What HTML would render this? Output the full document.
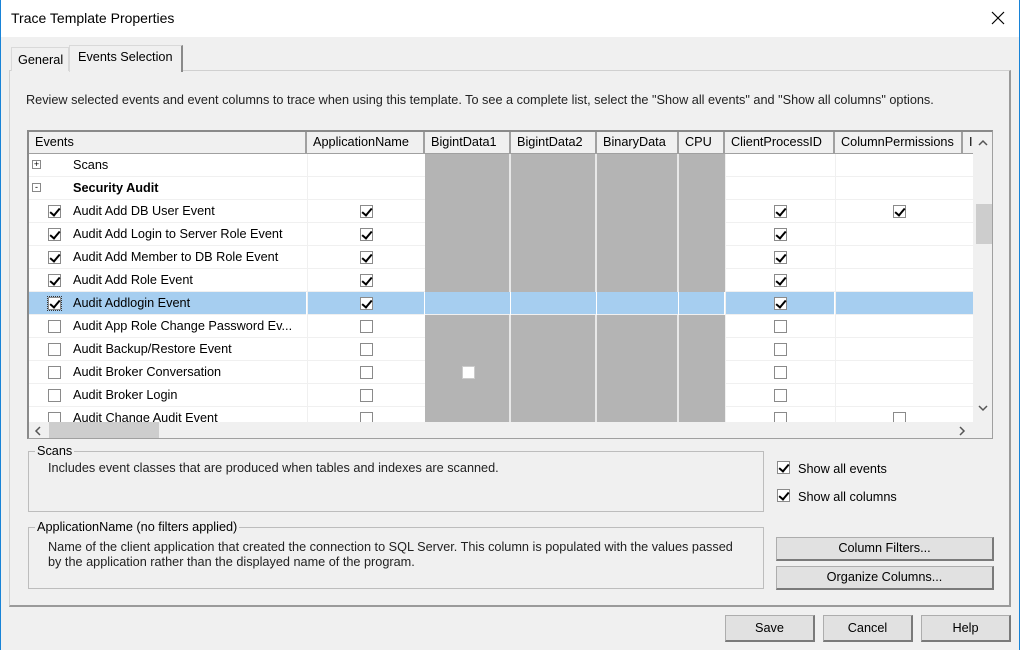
<!DOCTYPE html>
<html><head><style>
*{box-sizing:border-box;margin:0;padding:0}
body{width:1024px;height:650px;background:#fff;font-family:"Liberation Sans",sans-serif;font-size:12.7px;color:#000;position:relative;overflow:hidden}
.a{position:absolute}
.win{left:0;top:0;width:1020px;height:650px;background:#f0f0f0;border-left:1px solid #1883d7;border-right:1px solid #1883d7}
.title{left:1px;top:0;width:1018px;height:37px;background:#fff}
.cb{position:absolute;width:13px;height:13px;border:1px solid #8a8a8a;background:#fff}
.cb.c::after{content:"";position:absolute;left:3px;top:0px;width:4px;height:8px;border:solid #000;border-width:0 2px 2px 0;transform:rotate(40deg)}
.hd{position:absolute;top:0;height:22px;border-right:2px solid #a0a0a0;border-bottom:1px solid #a0a0a0;background:#f0f0f0;padding:3px 0 0 6px;white-space:nowrap;overflow:hidden}
.row{position:absolute;left:0;width:944px;height:23px;border-bottom:1px solid #f0f0f0}
.gr{position:absolute;top:0;height:23px;background:#b4b4b4;border-right:2px solid #e8e8e8}
.txt{position:absolute;left:44px;top:4px;white-space:nowrap}
.btn{position:absolute;background:#e1e1e1;border:1px solid #adadad;border-right:2px solid #7a7a7a;border-bottom:2px solid #7a7a7a;text-align:center;line-height:21px}
.gb{position:absolute;border:1px solid #bdbdbd}
.gl{position:absolute;top:-8px;left:6px;background:#f0f0f0;padding:0 2px}
</style></head><body>
<div class="a win"></div>
<div class="a title"></div>
<div class="a" style="left:11px;top:10px;font-size:14px">Trace Template Properties</div>
<svg class="a" style="left:991px;top:11px" width="14" height="14"><path d="M1 1L13 13M13 1L1 13" stroke="#000" stroke-width="1.2"/></svg>
<div class="a" style="left:9px;top:70px;width:1002px;height:537px;border:1px solid #d0d0d0;border-right:2px solid #9a9a9a;border-bottom:2px solid #9a9a9a;background:#f0f0f0"></div>
<div class="a" style="left:11px;top:47px;width:58px;height:24px;border:1px solid #d9d9d9;border-bottom:none;padding:5px 0 0 6px;background:#f0f0f0">General</div>
<div class="a" style="left:69px;top:45px;width:114px;height:27px;border:1px solid #d9d9d9;border-right:2px solid #8a8a8a;border-bottom:none;padding:4px 0 0 8px;background:#f0f0f0">Events Selection</div>
<div class="a" style="left:26px;top:93px;color:#222;white-space:nowrap">Review selected events and event columns to trace when using this template. To see a complete list, select the "Show all events" and "Show all columns" options.</div>
<div class="a" style="left:27px;top:130px;width:966px;height:309px;border:1px solid #a0a0a0;border-top:2px solid #8a8a8a;border-left:2px solid #8a8a8a;background:#fff;overflow:hidden">
 <div class="a" style="left:0;top:0;width:944px;height:290px;overflow:hidden">
  <div class="hd" style="left:0;width:278px">Events</div>
  <div class="hd" style="left:278px;width:118px">ApplicationName</div>
  <div class="hd" style="left:396px;width:86px">BigintData1</div>
  <div class="hd" style="left:482px;width:86px">BigintData2</div>
  <div class="hd" style="left:568px;width:82px">BinaryData</div>
  <div class="hd" style="left:650px;width:46px">CPU</div>
  <div class="hd" style="left:696px;width:110px">ClientProcessID</div>
  <div class="hd" style="left:806px;width:128px">ColumnPermissions</div>
  <div class="hd" style="left:934px;width:30px">I</div>
  <div class="a" style="left:0;top:22px;width:944px;height:270px">
   <div class="row" style="top:0"><div class="gr" style="left:396px;width:86px"></div><div class="gr" style="left:482px;width:86px"></div><div class="gr" style="left:568px;width:82px"></div><div class="gr" style="left:650px;width:46px;border:none"></div><div class="a" style="left:3px;top:6px;width:9px;height:9px;border:1px solid #888;font-size:9px;line-height:7px;text-align:center">+</div><div class="txt">Scans</div></div>
   <div class="row" style="top:23px"><div class="gr" style="left:396px;width:86px"></div><div class="gr" style="left:482px;width:86px"></div><div class="gr" style="left:568px;width:82px"></div><div class="gr" style="left:650px;width:46px;border:none"></div><div class="a" style="left:3px;top:6px;width:9px;height:9px;border:1px solid #888;font-size:9px;line-height:6px;text-align:center">-</div><div class="txt" style="font-weight:bold">Security Audit</div></div>
   <div class="row" style="top:46px"><div class="gr" style="left:396px;width:86px"></div><div class="gr" style="left:482px;width:86px"></div><div class="gr" style="left:568px;width:82px"></div><div class="gr" style="left:650px;width:46px;border:none"></div><div class="cb c" style="left:19px;top:5px"></div><div class="txt">Audit Add DB User Event</div><div class="cb c" style="left:331px;top:5px"></div><div class="cb c" style="left:745px;top:5px"></div><div class="cb c" style="left:864px;top:5px"></div></div>
   <div class="row" style="top:69px"><div class="gr" style="left:396px;width:86px"></div><div class="gr" style="left:482px;width:86px"></div><div class="gr" style="left:568px;width:82px"></div><div class="gr" style="left:650px;width:46px;border:none"></div><div class="cb c" style="left:19px;top:5px"></div><div class="txt">Audit Add Login to Server Role Event</div><div class="cb c" style="left:331px;top:5px"></div><div class="cb c" style="left:745px;top:5px"></div></div>
   <div class="row" style="top:92px"><div class="gr" style="left:396px;width:86px"></div><div class="gr" style="left:482px;width:86px"></div><div class="gr" style="left:568px;width:82px"></div><div class="gr" style="left:650px;width:46px;border:none"></div><div class="cb c" style="left:19px;top:5px"></div><div class="txt">Audit Add Member to DB Role Event</div><div class="cb c" style="left:331px;top:5px"></div><div class="cb c" style="left:745px;top:5px"></div></div>
   <div class="row" style="top:115px"><div class="gr" style="left:396px;width:86px"></div><div class="gr" style="left:482px;width:86px"></div><div class="gr" style="left:568px;width:82px"></div><div class="gr" style="left:650px;width:46px;border:none"></div><div class="cb c" style="left:19px;top:5px"></div><div class="txt">Audit Add Role Event</div><div class="cb c" style="left:331px;top:5px"></div><div class="cb c" style="left:745px;top:5px"></div></div>
   <div class="row" style="top:138px;background:#a6cef0"><div class="a" style="left:0;width:278px;height:23px;border-right:1px solid #fff"></div><div class="a" style="left:0;width:396px;height:23px;border-right:1px solid #fff"></div><div class="a" style="left:0;width:482px;height:23px;border-right:1px solid #fff"></div><div class="a" style="left:0;width:568px;height:23px;border-right:1px solid #fff"></div><div class="a" style="left:0;width:650px;height:23px;border-right:1px solid #fff"></div><div class="a" style="left:0;width:696px;height:23px;border-right:1px solid #fff"></div><div class="a" style="left:0;width:806px;height:23px;border-right:1px solid #fff"></div><div class="cb c" style="left:19px;top:5px;outline:1px dotted #333"></div><div class="txt">Audit Addlogin Event</div><div class="cb c" style="left:331px;top:5px"></div><div class="cb c" style="left:745px;top:5px"></div></div>
   <div class="row" style="top:161px"><div class="gr" style="left:396px;width:86px"></div><div class="gr" style="left:482px;width:86px"></div><div class="gr" style="left:568px;width:82px"></div><div class="gr" style="left:650px;width:46px;border:none"></div><div class="cb" style="left:19px;top:5px"></div><div class="txt">Audit App Role Change Password Ev...</div><div class="cb" style="left:331px;top:5px"></div><div class="cb" style="left:745px;top:5px"></div></div>
   <div class="row" style="top:184px"><div class="gr" style="left:396px;width:86px"></div><div class="gr" style="left:482px;width:86px"></div><div class="gr" style="left:568px;width:82px"></div><div class="gr" style="left:650px;width:46px;border:none"></div><div class="cb" style="left:19px;top:5px"></div><div class="txt">Audit Backup/Restore Event</div><div class="cb" style="left:331px;top:5px"></div><div class="cb" style="left:745px;top:5px"></div></div>
   <div class="row" style="top:207px"><div class="gr" style="left:396px;width:86px"></div><div class="gr" style="left:482px;width:86px"></div><div class="gr" style="left:568px;width:82px"></div><div class="gr" style="left:650px;width:46px;border:none"></div><div class="cb" style="left:19px;top:5px"></div><div class="txt">Audit Broker Conversation</div><div class="cb" style="left:331px;top:5px"></div><div class="cb" style="left:433px;top:5px;border-color:#ccc"></div><div class="cb" style="left:745px;top:5px"></div></div>
   <div class="row" style="top:230px"><div class="gr" style="left:396px;width:86px"></div><div class="gr" style="left:482px;width:86px"></div><div class="gr" style="left:568px;width:82px"></div><div class="gr" style="left:650px;width:46px;border:none"></div><div class="cb" style="left:19px;top:5px"></div><div class="txt">Audit Broker Login</div><div class="cb" style="left:331px;top:5px"></div><div class="cb" style="left:745px;top:5px"></div></div>
   <div class="row" style="top:253px"><div class="gr" style="left:396px;width:86px"></div><div class="gr" style="left:482px;width:86px"></div><div class="gr" style="left:568px;width:82px"></div><div class="gr" style="left:650px;width:46px;border:none"></div><div class="cb" style="left:19px;top:5px"></div><div class="txt">Audit Change Audit Event</div><div class="cb" style="left:331px;top:5px"></div><div class="cb" style="left:745px;top:5px"></div><div class="cb" style="left:864px;top:5px"></div></div>
  </div>
  <div class="a" style="left:278px;top:22px;width:1px;height:270px;background:#f0f0f0"></div>
  <div class="a" style="left:696px;top:22px;width:1px;height:270px;background:#f0f0f0"></div>
  <div class="a" style="left:806px;top:22px;width:1px;height:270px;background:#f0f0f0"></div>
 </div>
 <div class="a" style="left:944px;top:0;width:20px;height:290px;background:#f0f0f0"></div>
 <div class="a" style="left:947px;top:72px;width:16px;height:40px;background:#cdcdcd"></div>
 <svg class="a" style="left:948px;top:6px" width="12" height="10"><path d="M2 7L6 3L10 7" stroke="#555" stroke-width="1.5" fill="none"/></svg>
 <svg class="a" style="left:948px;top:271px" width="12" height="10"><path d="M2 3L6 7L10 3" stroke="#555" stroke-width="1.5" fill="none"/></svg>
 <div class="a" style="left:0;top:290px;width:964px;height:18px;background:#f0f0f0"></div>
 <div class="a" style="left:20px;top:290px;width:110px;height:17px;background:#cdcdcd"></div>
 <svg class="a" style="left:4px;top:293px" width="10" height="12"><path d="M7 2L3 6L7 10" stroke="#555" stroke-width="1.5" fill="none"/></svg>
 <svg class="a" style="left:928px;top:293px" width="10" height="12"><path d="M3 2L7 6L3 10" stroke="#555" stroke-width="1.5" fill="none"/></svg>
</div>
<div class="gb" style="left:28px;top:451px;width:736px;height:61px"><div class="gl">Scans</div><div class="a" style="left:19px;top:9px;color:#222;white-space:nowrap">Includes event classes that are produced when tables and indexes are scanned.</div></div>
<div class="gb" style="left:28px;top:527px;width:736px;height:62px"><div class="gl">ApplicationName (no filters applied)</div><div class="a" style="left:19px;top:12px;color:#222;line-height:15px;white-space:nowrap">Name of the client application that created the connection to SQL Server. This column is populated with the values passed<br>by the application rather than the displayed name of the program.</div></div>
<div class="cb c" style="left:777px;top:461px"></div><div class="a" style="left:798px;top:462px">Show all events</div>
<div class="cb c" style="left:777px;top:489px"></div><div class="a" style="left:798px;top:490px">Show all columns</div>
<div class="btn" style="left:776px;top:537px;width:218px;height:24px">Column Filters...</div>
<div class="btn" style="left:776px;top:566px;width:218px;height:24px">Organize Columns...</div>
<div class="btn" style="left:725px;top:615px;width:90px;height:27px;line-height:24px;border:2px solid #7a7a7a;border-left:1px solid #adadad;border-top:1px solid #adadad">Save</div>
<div class="btn" style="left:823px;top:615px;width:90px;height:27px;line-height:24px">Cancel</div>
<div class="btn" style="left:921px;top:615px;width:90px;height:27px;line-height:24px">Help</div>
</body></html>
